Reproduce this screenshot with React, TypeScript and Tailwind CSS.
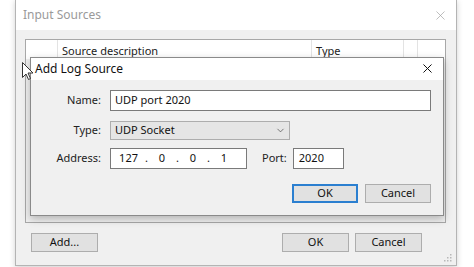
import { X, ChevronDown } from 'lucide-react'

function Btn({ label, w, primary }: { label: string; w: string; primary?: boolean }) {
  return (
    <div
      className={`${w} h-[19px] flex items-center justify-center text-[11px] text-[#111] bg-[#e1e1e1] border ${
        primary ? 'border-[#2b7fd0] shadow-[inset_0_0_0_1px_#2b7fd0]' : 'border-[#adadad]'
      }`}
    >
      {label}
    </div>
  )
}

function Label({ text }: { text: string }) {
  return <div className="w-[70px] text-right text-[11px] text-[#222]">{text}</div>
}

export default function App() {
  return (
    <div className="relative w-[474px] h-[267px] bg-white overflow-hidden font-['Segoe_UI','Noto_Sans',sans-serif]">
      {/* outer window: Input Sources */}
      <div className="ml-[15px] -mt-px w-[442px] h-[267px] border border-[#b4b4b4] bg-[#f0f0f0] flex flex-col shadow-[0_2px_6px_rgba(0,0,0,0.18)]">
        <div className="h-[30px] bg-white flex items-center justify-between pl-[7px] pr-[8px]">
          <span className="text-[12px] text-[#9a9a9a]">Input Sources</span>
          <X className="w-[15px] h-[15px] text-[#a0a0a0]" strokeWidth={1.1} />
        </div>
        <div className="flex-1 flex flex-col pl-[9px] pr-[10px] pt-[9px]">
          {/* list view */}
          <div className="h-[184px] border border-[#a8a8a8] bg-[#f0f0f0]">
            <div className="h-[19px] bg-white flex text-[11px] text-[#222]">
              <div className="w-[32px] border-r border-[#e3e3e3]" />
              <div className="w-[254px] pl-[4px] pt-[3px] border-r border-[#e3e3e3]">Source description</div>
              <div className="w-[92px] pl-[4px] pt-[3px] border-r border-[#e3e3e3]">Type</div>
              <div className="w-[14px] border-r border-[#e3e3e3]" />
              <div className="flex-1" />
            </div>
          </div>
          <div className="mt-[10px] flex items-center">
            <div className="ml-[6px]">
              <Btn label="Add..." w="w-[67px]" />
            </div>
            <div className="ml-auto flex gap-[6px] mr-[24px]">
              <Btn label="OK" w="w-[67px]" />
              <Btn label="Cancel" w="w-[67px]" />
            </div>
          </div>
        </div>
      </div>

      {/* resize grip */}
      <svg className="absolute left-[444px] top-[254px]" width="8" height="8" viewBox="0 0 8 8">
        <rect x="6" y="0" width="1.5" height="1.5" fill="#b8b8b8" />
        <rect x="3" y="3" width="1.5" height="1.5" fill="#b8b8b8" />
        <rect x="6" y="3" width="1.5" height="1.5" fill="#b8b8b8" />
        <rect x="0" y="6" width="1.5" height="1.5" fill="#b8b8b8" />
        <rect x="3" y="6" width="1.5" height="1.5" fill="#b8b8b8" />
        <rect x="6" y="6" width="1.5" height="1.5" fill="#b8b8b8" />
      </svg>

      {/* Add Log Source dialog */}
      <div className="absolute left-[30px] top-[57px] w-[414px] h-[159px] border border-[#8a8a8a] bg-[#f0f0f0] flex flex-col shadow-[0_3px_8px_rgba(0,0,0,0.25)]">
        <div className="h-[22px] bg-white flex items-start justify-between pl-[4px] pr-[8px] pt-[2px]">
          <span className="text-[12px] text-[#111]">Add Log Source</span>
          <X className="mt-[1px] w-[15px] h-[15px] text-[#111]" strokeWidth={1.6} />
        </div>
        <div className="flex flex-col pt-[10px]">
          <div className="flex items-center gap-[9px]">
            <Label text="Name:" />
            <div className="w-[321px] h-[21px] bg-white border border-[#7a7a7a] flex items-center pl-[4px] text-[11px] text-[#111]">
              UDP port 2020
            </div>
          </div>
          <div className="mt-[10px] flex items-center gap-[9px]">
            <Label text="Type:" />
            <div className="w-[180px] h-[19px] bg-[#e5e5e5] border border-[#adadad] flex items-center justify-between pl-[4px] pr-[3px] text-[11px] text-[#111]">
              <span>UDP Socket</span>
              <ChevronDown className="w-[11px] h-[11px] text-[#444]" strokeWidth={1.5} />
            </div>
          </div>
          <div className="mt-[8px] flex items-center gap-[9px]">
            <Label text="Address:" />
            <div className="w-[137px] h-[21px] bg-white border border-[#7a7a7a] flex items-center text-[11px] text-[#111]">
              <span className="w-[27px] text-right">127</span>
              <span className="w-[17px] text-center">.</span>
              <span className="w-[14px] text-center">0</span>
              <span className="w-[17px] text-center">.</span>
              <span className="w-[14px] text-center">0</span>
              <span className="w-[17px] text-center">.</span>
              <span className="w-[14px] text-center">1</span>
            </div>
            <span className="ml-[6px] text-[11px] text-[#222]">Port:</span>
            <div className="-ml-[3px] w-[51px] h-[21px] bg-white border border-[#7a7a7a] flex items-center pl-[5px] text-[11px] text-[#111]">
              2020
            </div>
          </div>
          <div className="mt-[15px] flex justify-end gap-[7px] pr-[12px]">
            <Btn label="OK" w="w-[66px]" primary />
            <Btn label="Cancel" w="w-[66px]" />
          </div>
        </div>
      </div>

      {/* mouse cursor */}
      <svg className="absolute left-[22px] top-[62px]" width="12" height="19" viewBox="0 0 12 19">
        <path d="M0.5 0.5 L0.5 15.5 L4 12 L6.5 17.5 L8.5 16.5 L6 11 L11 11 Z" fill="white" stroke="#333" strokeWidth="1" strokeLinejoin="round" />
      </svg>
    </div>
  )
}
